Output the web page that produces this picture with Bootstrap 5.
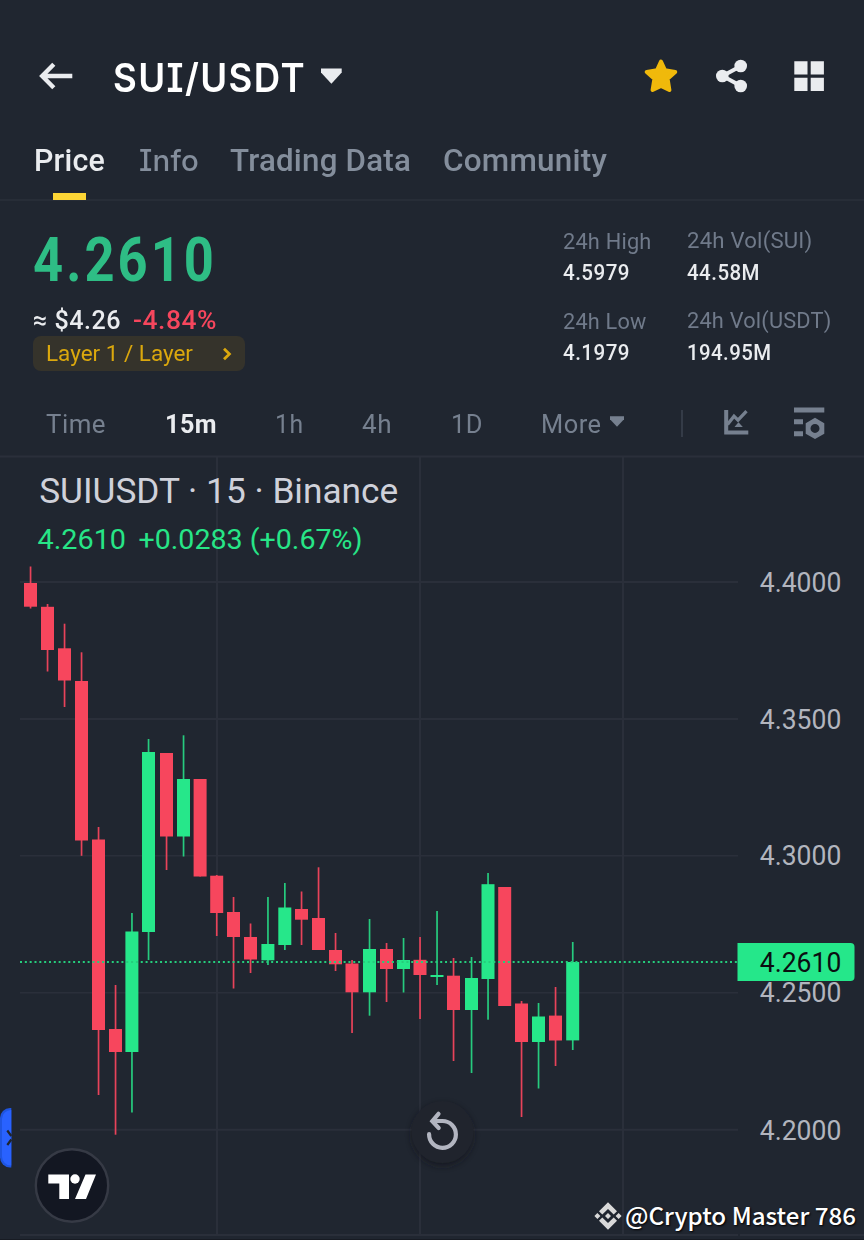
<!DOCTYPE html>
<html lang="en">
<head>
<meta charset="utf-8">
<meta name="viewport" content="width=device-width, initial-scale=1">
<title>SUI/USDT</title>
<link href="https://cdn.jsdelivr.net/npm/bootstrap@5.3.0/dist/css/bootstrap.min.css" rel="stylesheet">
<style>
  body { background:#202630; color:#eaecef; font-family:Roboto,"Liberation Sans",sans-serif; width:864px; height:1240px; overflow:hidden; }
  svg { display:block; flex:none; }
  .fit { display:inline-block; white-space:nowrap; transform-origin:0 50%; }
  .topbar { height:60px; margin-top:46px; padding-left:39px; padding-right:40px; }
  .pair { font:600 39px/60px Inter,sans-serif; font-feature-settings:"cv08"; letter-spacing:1.5px; color:#fff; margin-left:39px; padding-top:3px; }
  .caret { margin-left:15px; }
  .tabs { display:grid; grid-template-columns:105px 91px 213px 200px; height:95px; padding:24px 0 0 34px; border-bottom:2px solid #272d37; font:500 30.5px/62px Roboto,sans-serif; letter-spacing:.2px; color:#848e9c; }
  .tabs .serif-i { font-family:Inter,sans-serif; font-size:29.5px; line-height:60px; font-feature-settings:"cv08"; }
  .tabs .on { color:#eaecef; }
  .tabs .on::after { content:""; display:block; width:33px; height:7px; margin:1px 0 0 19px; background:#fcd535; }
  .summary { height:191px; padding:29px 0 0 33px; }
  .last { font-size:60.5px; line-height:62px; height:61px; font-weight:700; color:#2ebd85; letter-spacing:3.5px; }
  .change { font-size:26px; line-height:33px; font-weight:500; margin-top:13px; letter-spacing:.5px; height:33px; }
  .down { color:#f6465d; }
  .tagline { width:212px; height:35px; border-radius:8px; background:#35332b; color:#dba80d; font-size:22.5px; line-height:35px; padding-left:13px; margin-top:-1px; }
  .stats { font-size:22.5px; line-height:31px; margin-top:-4px; }
  .stats .lbl { color:#707a8a; letter-spacing:.2px; }
  .stats .val { font-weight:500; margin-bottom:18px; letter-spacing:.5px; height:31px; }
  .stat-a { width:124px; }
  .stat-b { width:177px; margin-top:-1px; }
  .stat-b .val { padding-top:.5px; }
  .frames { display:grid; grid-template-columns:119px 110px 87px 89px 90px 69px 71px 42px 71px 30px; height:63px; padding-left:46px; font-size:26px; letter-spacing:.5px; color:#76808f; align-items:center; }
  .frames > div:not(.rule) { padding-top:2px; }
  .frames .on { font-weight:700; color:#eaecef; }
  .rule { width:2px; height:27px; background:#343b47; }
  .chart text { font-family:Roboto,"Liberation Sans",sans-serif; }
  .chart .mark-text { font-family:"Noto Sans CJK SC","Noto Sans",sans-serif; font-weight:500; text-shadow:1px 1px 2px #000; }
</style>
</head>
<body>
<header class="topbar d-flex align-items-center">
  <svg width="35" height="28" viewBox="0 0 35 28" fill="none" stroke="#eaecef" stroke-width="4.4"><path d="M33.3 14H3.5M14.8 2.200 3.200 14l11.600 11.800"/></svg>
  <span class="pair"><span class="fit" data-w="193">SUI/USDT</span></span>
  <svg class="caret" width="21" height="16" viewBox="0 0 21 16"><path fill="#eaecef" d="M0 .5h20.700v4L10.400 15.800 0 4.500z"/></svg>
  <div class="d-flex align-items-center ms-auto">
    <svg width="34" height="34" viewBox="0 0 34 34"><path fill="#f0b90b" stroke="#f0b90b" stroke-width="4" stroke-linejoin="round" d="M17 2.500l4 8.800 10.200 1.600-7.600 6.800 1.800 11.300L17 27 8.600 31l1.800-11.300L2.800 12.900l10.200-1.600z"/></svg>
    <svg style="margin-left:38px" width="32" height="34" viewBox="0 0 32 34"><g fill="#eaecef"><circle cx="6.300" cy="17" r="6.300"/><circle cx="24.700" cy="7" r="6.300"/><circle cx="24.700" cy="27" r="6.300"/></g><path d="M25 7 6.500 17 25 27" fill="none" stroke="#eaecef" stroke-width="4"/></svg>
    <svg style="margin-left:46px" width="30" height="30" viewBox="0 0 30 30"><path fill="#eaecef" d="M.3.300h13.200v13.200H.3zM16.700.300h13.200v13.200H16.700zM.3 16.700h13.200v13.200H.3zM16.700 16.700h13.200v13.200H16.700z"/></svg>
  </div>
</header>
<nav class="tabs">
  <div class="on"><span class="fit" data-w="71">Price</span></div>
  <div><span class="fit serif-i" data-w="60">Info</span></div>
  <div><span class="fit" data-w="181">Trading Data</span></div>
  <div><span class="fit" data-w="164">Community</span></div>
</nav>
<section class="summary d-flex">
  <div class="flex-grow-1">
    <div class="last"><span class="fit" data-w="184">4.2610</span></div>
    <div class="change d-flex"><span class="fit" data-w="88">≈ $4.26</span><span class="fit down" style="margin-left:11.500px" data-w="84">-4.84%</span></div>
    <div class="tagline d-flex align-items-center">
      <span class="fit" data-w="147">Layer 1 / Layer</span>
      <svg style="margin-left:29px" width="10" height="14" viewBox="0 0 10 14"><path d="M2 1.800 7.400 7 2 12.200" fill="none" stroke="#dba80d" stroke-width="2.800"/></svg>
    </div>
  </div>
  <div class="stats d-flex">
    <div class="stat-a">
      <div class="lbl"><span class="fit" data-w="88.500">24h High</span></div>
      <div class="val"><span class="fit" data-w="67">4.5979</span></div>
      <div class="lbl"><span class="fit" data-w="83.500">24h Low</span></div>
      <div class="val"><span class="fit" data-w="67">4.1979</span></div>
    </div>
    <div class="stat-b">
      <div class="lbl"><span class="fit" data-w="125.500">24h Vol(SUI)</span></div>
      <div class="val"><span class="fit" data-w="73">44.58M</span></div>
      <div class="lbl"><span class="fit" data-w="144.500">24h Vol(USDT)</span></div>
      <div class="val"><span class="fit" data-w="84.500">194.95M</span></div>
    </div>
  </div>
</section>
<div class="frames">
  <div><span class="fit" data-w="60">Time</span></div>
  <div class="on"><span class="fit" data-w="52">15m</span></div>
  <div><span class="fit" data-w="28.500">1h</span></div>
  <div><span class="fit" data-w="30">4h</span></div>
  <div><span class="fit" data-w="32">1D</span></div>
  <div><span class="fit" data-w="60.500">More</span></div>
  <svg width="14" height="11" viewBox="0 0 14 11" style="margin-top:-5px"><path fill="#76808f" d="M0 .3h14v3L7 10.800 0 3.300z"/></svg>
  <div class="rule"></div>
  <svg width="26" height="26" viewBox="0 0 26 26" style="margin-top:-3px"><path fill="none" stroke="#76808f" stroke-width="4" d="M3.200 1v22.500H25.300"/><path fill="none" stroke="#76808f" stroke-width="3.300" d="M4.500 15.500 11 7.200l4 4L23.500 2.200"/><path fill="#76808f" d="M15.500 13.200l4.300 4.800h-8.300z"/></svg>
  <svg width="31" height="32" viewBox="0 0 31 32" style="margin-top:-2px"><g fill="#76808f"><path d="M0 .5h30.300v5H0zM0 12.300h9v5H0zM0 24.300h9v5H0z"/><path fill-rule="evenodd" d="M21 10.800l9.300 5.400v10.500L21 32l-9.300-5.300V16.200zM21 16.900a4.500 4.500 0 1 0 0 9 4.500 4.500 0 0 0 0-9z"/></g></svg>
</div>
<svg class="chart" width="864" height="785" viewBox="0 455 864 785">
  <defs><filter id="soft" x="-30%" y="-30%" width="160%" height="160%"><feGaussianBlur stdDeviation="3"/></filter></defs>
  <g fill="#2a2f3a">
    <path d="M0 455.500h864v2H0zM20 581h718v2H20zM20 718h718v2H20zM20 855h718v1.500H20zM20 992h718v1.500H20zM20 1128.700h718v2H20zM20 1234h718v2H20zM740 1234h124v2H740z"/>
    <path d="M216 457h2v777h-2zM419 457h2v777h-2zM622 457h2v777h-2z"/>
  </g>
  <path d="M0 1239.500h864" stroke="#171b23"/>
  <g id="candles"></g>
  <path d="M20 962h718" stroke="#25cd7c" stroke-width="2" stroke-dasharray="2 2.830"/>
  <text x="39.200" y="503.300" font-size="35.500" fill="#cfd1da" textLength="359" lengthAdjust="spacingAndGlyphs">SUIUSDT · 15 · Binance</text>
  <g font-size="27.500" fill="#27e587">
    <text x="37.500" y="549" textLength="88.500" lengthAdjust="spacingAndGlyphs">4.2610</text>
    <text x="138.500" y="549" textLength="224" lengthAdjust="spacingAndGlyphs">+0.0283 (+0.67%)</text>
  </g>
  <path d="M737.500 943h113a4 4 0 0 1 4 4v30a4 4 0 0 1-4 4h-113z" fill="#25e78a"/>
  <g font-size="27" fill="#b2b5be" id="axis"></g>
  <circle cx="442.500" cy="1135" r="31" fill="#12151c" opacity=".65" filter="url(#soft)"/>
  <circle cx="442.500" cy="1132" r="31" fill="#20242d"/>
  <path d="M429.100 1134.200A13.400 13.400 0 1 0 442.500 1121H434M438.500 1113.800 432.300 1121.200 438.700 1128" fill="none" stroke="#b2b5c0" stroke-width="4.200" stroke-linecap="round"/>
  <circle cx="72" cy="1185.500" r="36.200" fill="#131722" stroke="#363a45" stroke-width="2.400"/>
  <path fill="#fff" d="M48.300 1174.500H69V1199h-9.700v-15.500h-11zM85.500 1174.500H96L86 1199H75z"/><circle cx="75" cy="1179" r="4.700" fill="#fff"/>
  <path d="M11.300 1108H10a10 10 0 0 0-10 10v39.500a10 10 0 0 0 10 10h1.300z" fill="#1f55e0"/>
  <path d="M11.300 1110a9 9 0 0 0-9.300 9v37.500a9 9 0 0 0 9.300 9z" fill="#2962ff"/>
  <path d="M7.300 1130.500 11.300 1136M7.300 1145 11.300 1139.500" stroke="#20242c" stroke-width="2.200"/>
  <g fill="#d9d9d9"><path d="M608 1202.300 617 1211.300 613.700 1214.600 608 1209 602.300 1214.600 599 1211.300zM608 1229.700 599 1220.700 602.300 1217.400 608 1223 613.700 1217.400 617 1220.700zM608 1213 611 1216 608 1219 605 1216zM597.400 1213 600.400 1216 597.400 1219 594.400 1216zM618.600 1213 621.600 1216 618.600 1219 615.600 1216z"/></g>
  <text class="mark-text" x="625" y="1224.800" font-size="24" fill="#fff" textLength="231" lengthAdjust="spacingAndGlyphs">@Crypto Master 786</text>
</svg>
<script>
  // Condense or widen each label to its own width
  document.querySelectorAll('.fit').forEach(function (el) {
    var w = +el.dataset.w, n = el.getBoundingClientRect().width;
    el.style.transform = 'scaleX(' + (w / n) + ')';
    // transforms leave the layout box alone, so the margin takes up the difference
    el.style.marginRight = (w - n) + 'px';
  });
  var NS = 'http://www.w3.org/2000/svg';
  function add(parent, tag, attrs, text) {
    var e = document.createElementNS(NS, tag);
    for (var k in attrs) e.setAttribute(k, attrs[k]);
    if (text) e.textContent = text;
    document.getElementById(parent).appendChild(e);
  }
  // left edge, high, body top, body bottom, low, rising
  [[24,566.5,583,606.7,608.5,0],[41,604,606.8,650,671.5,0],[58,623.7,648.3,680.5,707,0],[75,652.3,681,840.5,855.8,0],
   [92,827,839.5,1030,1095,0],[109,985,1029,1052,1134.7,0],[125.4,913,931.5,1052,1112.5,1],[142,739,752,932,960,1],
   [160,753,753,836.5,870,0],[177,735.3,779,836.5,856.5,1],[193.6,779,779,876.5,876.5,0],[210.2,875,875.7,913,936,0],
   [227,897,912,937,988.5,0],[244,923.5,937,959.5,973,0],[261.4,897,944,960.3,965,1],[278.3,883,907.5,945,950,1],
   [295,891.5,909,919.7,945,0],[312,867.3,918,950,950,0],[329,933,950,964.3,971,0],[345.5,960,963.5,992.3,1033,0],
   [363,919,949,992.3,1015.7,1],[380,943,949,969,1002,0],[397,938,960,969,992.5,1],[413.5,937,959.8,975,1019,0],
   [430.5,911,975,977,985,1],[447,958,975.7,1010,1061,0],[465,957,978,1010,1073,1],[481.5,873,884.2,979,1019.7,1],
   [498.2,887,887,1006,1006,0],[515,1001,1003.5,1042,1117,0],[532,1003,1016.5,1042,1088.5,1],[549,987,1015.6,1040.5,1066,0],
   [566.2,942,962,1040.4,1050,1]].forEach(function (c) {
    add('candles', 'rect', {x:c[0] + 5.7, y:c[1], width:1.7, height:c[4] - c[1], fill:c[5] ? '#26cb7e' : '#e8435a'});
    add('candles', 'rect', {x:c[0], y:c[2], width:13, height:c[3] - c[2], fill:c[5] ? '#26e78a' : '#f7465d'});
  });
  [['4.4000',591.7],['4.3500',728.5],['4.3000',865.3],['4.2500',1002.3],['4.2000',1139.5]].forEach(function (a) {
    add('axis', 'text', {x:759.8, y:a[1], textLength:81.5, lengthAdjust:'spacingAndGlyphs'}, a[0]);
  });
  add('axis', 'text', {x:759.8, y:971.7, textLength:81.5, lengthAdjust:'spacingAndGlyphs', fill:'#0b0e11'}, '4.2610');
</script>
<script src="https://cdn.jsdelivr.net/npm/bootstrap@5.3.0/dist/js/bootstrap.bundle.min.js"></script>
</body>
</html>
